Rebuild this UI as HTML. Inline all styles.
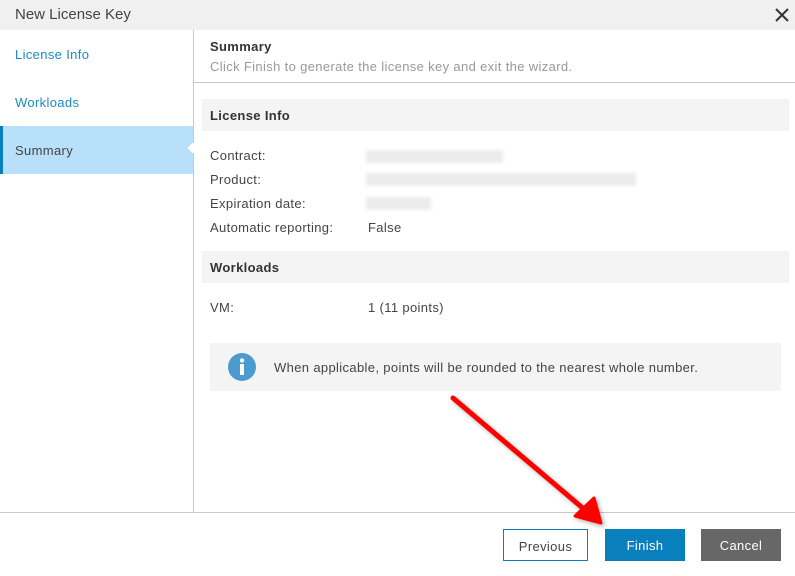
<!DOCTYPE html><html><head><style>
body{margin:0;width:795px;height:576px;background:#fff;font-family:"Liberation Sans",sans-serif;font-size:13px;letter-spacing:0.35px;color:#444;position:relative;overflow:hidden}
.a{position:absolute}
.blur{position:absolute;background:#ececec;filter:blur(1.5px);height:13px}
.btn{position:absolute;top:529px;height:32px;line-height:33px;text-align:center;box-sizing:border-box;font-size:13px}
</style></head><body>
<div class="a" style="left:0;top:0;width:795px;height:30px;background:#f0f0f0"></div>
<div class="a" style="left:15px;top:6px;font-size:15px;letter-spacing:0;color:#444">New License Key</div>
<svg class="a" style="left:775px;top:8px" width="14" height="14"><path d="M1 1L13 13M13 1L1 13" stroke="#333" stroke-width="2"/></svg>
<div class="a" style="left:193px;top:30px;width:1px;height:482px;background:#c8c8c8"></div>
<div class="a" style="left:15px;top:47px;color:#1a8ac4">License Info</div>
<div class="a" style="left:15px;top:95px;color:#1a8ac4">Workloads</div>
<div class="a" style="left:0;top:126px;width:193px;height:48px;background:#b8e0fb"></div>
<div class="a" style="left:0;top:126px;width:3px;height:48px;background:#0a7fbd"></div>
<div class="a" style="top:144px;width:8px;height:8px;background:#fff;transform:rotate(45deg);left:189px"></div>
<div class="a" style="left:15px;top:143px;color:#444">Summary</div>
<div class="a" style="left:210px;top:39px;font-weight:bold;color:#333">Summary</div>
<div class="a" style="left:210px;top:59px;color:#999">Click Finish to generate the license key and exit the wizard.</div>
<div class="a" style="left:194px;top:82px;width:601px;height:1px;background:#c8c8c8"></div>
<div class="a" style="left:202px;top:99px;width:587px;height:32px;background:#f4f4f4"></div>
<div class="a" style="left:210px;top:108px;font-weight:bold;color:#333">License Info</div>
<div class="a" style="left:210px;top:148px">Contract:</div>
<div class="a" style="left:210px;top:172px">Product:</div>
<div class="a" style="left:210px;top:196px">Expiration date:</div>
<div class="a" style="left:210px;top:220px">Automatic reporting:</div>
<div class="blur" style="left:366px;top:150px;width:137px"></div>
<div class="blur" style="left:366px;top:173px;width:270px"></div>
<div class="blur" style="left:366px;top:197px;width:65px"></div>
<div class="a" style="left:368px;top:220px">False</div>
<div class="a" style="left:202px;top:251px;width:587px;height:32px;background:#f4f4f4"></div>
<div class="a" style="left:210px;top:260px;font-weight:bold;color:#333">Workloads</div>
<div class="a" style="left:210px;top:300px">VM:</div>
<div class="a" style="left:368px;top:300px">1 (11 points)</div>
<div class="a" style="left:210px;top:343px;width:571px;height:48px;background:#f4f4f4"></div>
<svg class="a" style="left:228px;top:353px" width="28" height="28"><circle cx="14" cy="14" r="14" fill="#4a9ccf"/><circle cx="14" cy="7.5" r="2.2" fill="#fff"/><rect x="12" y="11" width="4" height="11" fill="#fff"/></svg>
<div class="a" style="left:274px;top:360px">When applicable, points will be rounded to the nearest whole number.</div>
<div class="a" style="left:0;top:512px;width:795px;height:1px;background:#c8c8c8"></div>
<div class="btn" style="left:503px;width:85px;border:1px solid #0a7fbd;color:#444">Previous</div>
<div class="btn" style="left:605px;width:80px;background:#0a7fbd;color:#fff">Finish</div>
<div class="btn" style="left:701px;width:80px;background:#676767;color:#fff">Cancel</div>
<svg class="a" style="left:0;top:0;filter:drop-shadow(2px 2px 2px rgba(0,0,0,.3))" width="795" height="576"><line x1="453" y1="398" x2="585" y2="510" stroke="#f00" stroke-width="5" stroke-linecap="round"/><polygon points="601,523 575,516 594,498" fill="#f00" stroke="#f00" stroke-width="3" stroke-linejoin="round"/></svg>
</body></html>
